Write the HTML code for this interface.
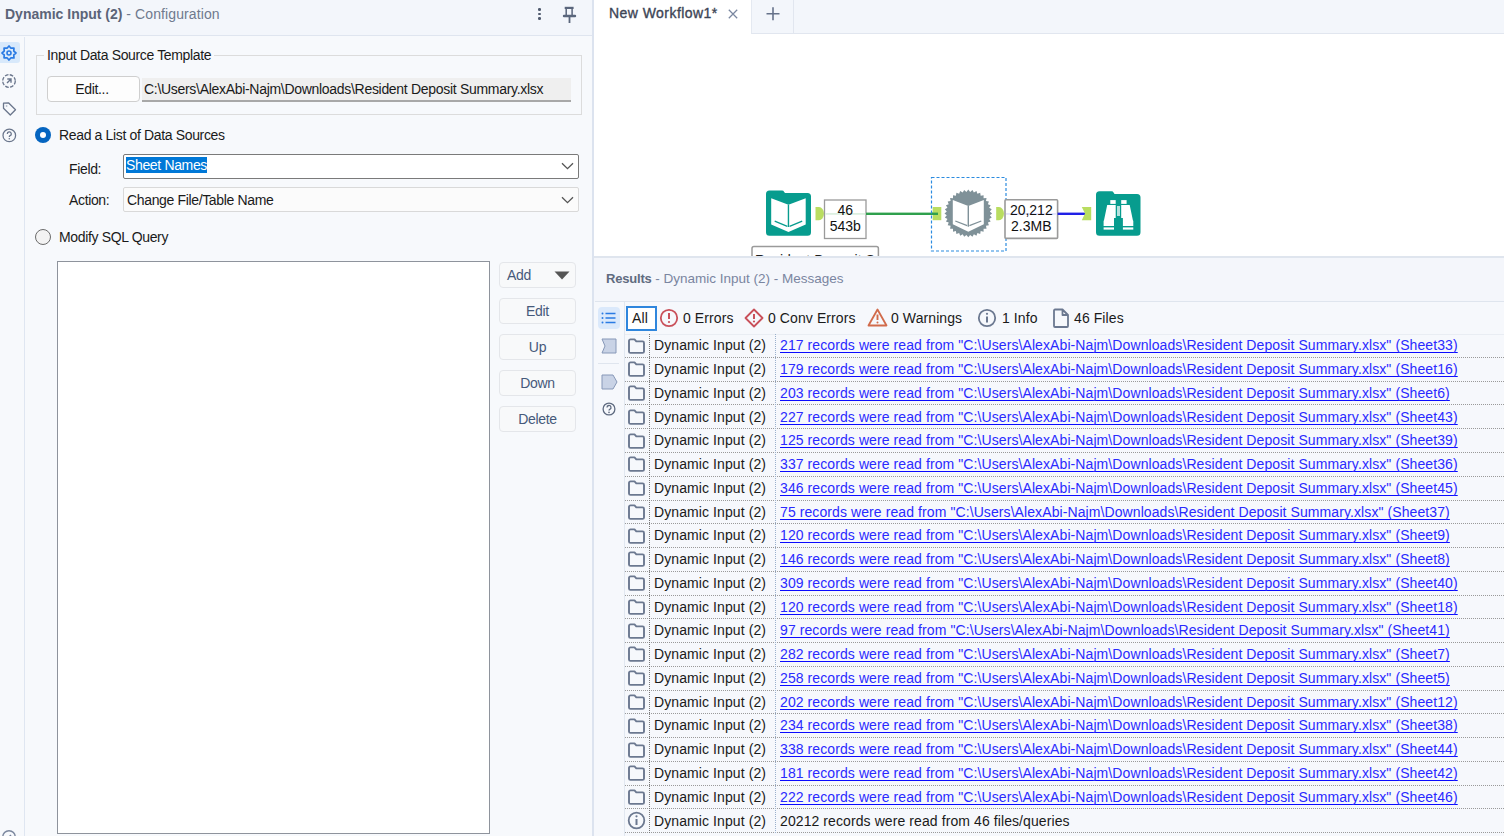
<!DOCTYPE html><html><head><meta charset="utf-8"><style>
*{margin:0;padding:0;box-sizing:border-box}
html,body{width:1504px;height:836px;overflow:hidden;background:#f7f9fc;font-family:"Liberation Sans",sans-serif;color:#1b1b1b}
.a{position:absolute}
.t{position:absolute;white-space:nowrap}
.lp{font-size:14px;letter-spacing:-0.35px;color:#1a1a1a}
.rt{font-size:14px;color:#1a1a1a;letter-spacing:0.09px}
.row{position:absolute;left:625px;width:879px;height:23.76px;border-bottom:1px dotted #9a9a9a}
.lnk{color:#2a2aff;text-decoration:underline;text-decoration-color:#0a0aff;text-decoration-skip-ink:none;text-underline-offset:1.8px}
.btn{position:absolute;left:499px;width:77px;height:25.5px;border:1px solid #e4e6ea;border-radius:4px;background:#f8f9fa;font-size:14px;color:#46597a;text-align:center;line-height:25px;letter-spacing:-0.3px}
</style></head><body>
<div class="a" style="left:0;top:0;width:592px;height:36px;background:#f3f6fb;border-bottom:1px solid #dfe5ef"></div>
<div class="t" style="left:5px;top:6px;font-size:14px;line-height:16px;color:#5b6478"><b>Dynamic Input (2)</b> <span style="color:#6f7a8e;letter-spacing:0.1px">- Configuration</span></div>
<div class="a" style="left:538px;top:8px;width:2.6px;height:2.6px;border-radius:50%;background:#4f5a6e"></div>
<div class="a" style="left:538px;top:12.5px;width:2.6px;height:2.6px;border-radius:50%;background:#4f5a6e"></div>
<div class="a" style="left:538px;top:17px;width:2.6px;height:2.6px;border-radius:50%;background:#4f5a6e"></div>
<svg class="a" style="left:562px;top:5px" width="16" height="20" viewBox="0 0 16 20"><path d="M2.7 2.9h8.9" stroke="#5a667c" stroke-width="2.2"/><path d="M4.2 3.5v7.5M10.1 3.5v7.5" stroke="#5a667c" stroke-width="1.5"/><path d="M2 11h11" stroke="#5a667c" stroke-width="2.4" stroke-linecap="round"/><path d="M7.5 12v6" stroke="#5a667c" stroke-width="1.8"/></svg>
<div class="a" style="left:24px;top:37px;width:1px;height:799px;background:#dfe6f1"></div>
<div class="a" style="left:0;top:42px;width:20px;height:21px;background:#d8e9fb;border-radius:0 3px 3px 0"></div>
<svg class="a" style="left:0px;top:44px" width="18" height="18" viewBox="0 0 18 18"><polygon points="9.00,2.00 10.99,4.20 13.95,4.05 13.80,7.01 16.00,9.00 13.80,10.99 13.95,13.95 10.99,13.80 9.00,16.00 7.01,13.80 4.05,13.95 4.20,10.99 2.00,9.00 4.20,7.01 4.05,4.05 7.01,4.20" fill="none" stroke="#2a7be4" stroke-width="1.7" stroke-linejoin="round"/><circle cx="9" cy="9" r="2" fill="none" stroke="#2a7be4" stroke-width="1.6"/></svg>
<svg class="a" style="left:1px;top:72.5px" width="16" height="16" viewBox="0 0 16 16"><circle cx="8" cy="8" r="6.3" fill="none" stroke="#6a768c" stroke-width="1.3" stroke-dasharray="3.6 1.35"/><path d="M6 10l4-4M6.3 6H10v3.7" stroke="#6a768c" stroke-width="1.4" fill="none"/></svg>
<svg class="a" style="left:2px;top:100.5px" width="16" height="16" viewBox="0 0 16 16"><path d="M1.5 2.2v5l6.8 6.8 5.2-5.2L6.7 2z" fill="none" stroke="#6a768c" stroke-width="1.3" stroke-linejoin="round"/><circle cx="4.6" cy="5" r=".9" fill="#b8c0cc"/></svg>
<svg class="a" style="left:1.5px;top:127.5px" width="15" height="15" viewBox="0 0 15 15"><circle cx="7.3" cy="7.4" r="6.3" fill="none" stroke="#6a768c" stroke-width="1.25"/><path d="M5.3 5.9a2 2 0 1 1 2.8 1.8c-.6.3-.8.6-.8 1.3" stroke="#6a768c" stroke-width="1.3" fill="none"/><circle cx="7.3" cy="10.8" r=".8" fill="#6a768c"/></svg>
<svg class="a" style="left:0.85px;top:828.8px" width="16" height="16" viewBox="0 0 16 16"><circle cx="8" cy="8" r="6.3" fill="none" stroke="#7b879e" stroke-width="1.5"/><path d="M5.5 10.5l4.5-4.5" stroke="#7b879e" stroke-width="1.5"/></svg>
<div class="a" style="left:36px;top:55px;width:546px;height:60px;border:1px solid #dcdcdc"></div>
<div class="t lp" style="left:44px;top:46px;line-height:18px;padding:0 3px;background:#f7f9fc">Input Data Source Template</div>
<div class="a" style="left:47px;top:76px;width:93px;height:26px;border:1px solid #cfcfcf;border-radius:4px;background:#fdfdfd"></div>
<div class="t lp" style="left:45.5px;top:80px;width:93px;text-align:center;line-height:18px">Edit...</div>
<div class="a" style="left:142px;top:78px;width:429px;height:24px;background:#efefef;border-bottom:2px solid #a8a8a8"></div>
<div class="t lp" style="left:144px;top:80px;line-height:18px;letter-spacing:-0.3px">C:\Users\AlexAbi-Najm\Downloads\Resident Deposit Summary.xlsx</div>
<div class="a" style="left:35px;top:127px;width:16px;height:16px;border-radius:50%;background:#0565c0"></div>
<div class="a" style="left:40px;top:132px;width:6px;height:6px;border-radius:50%;background:#fff"></div>
<div class="t lp" style="left:59px;top:126px;line-height:18px">Read a List of Data Sources</div>
<div class="t lp" style="left:69px;top:160px;line-height:18px">Field:</div>
<div class="t lp" style="left:69px;top:191px;line-height:18px">Action:</div>
<div class="a" style="left:123px;top:154px;width:456px;height:25px;border:1px solid #7a7a7a;border-radius:2px;background:#fff"></div>
<div class="a" style="left:126px;top:157px;width:81px;height:16px;background:#0078d7"></div>
<div class="t lp" style="left:126px;top:156px;line-height:18px;color:#fff">Sheet Names</div>
<div class="a" style="left:123px;top:187px;width:456px;height:25px;border:1px solid #d9d9d9;border-radius:2px;background:#fbfbfb"></div>
<div class="t lp" style="left:127px;top:191px;line-height:18px">Change File/Table Name</div>
<svg class="a" style="left:561px;top:162px" width="13" height="8" viewBox="0 0 13 8"><path d="M1 1.2l5.5 5.5L12 1.2" stroke="#555" stroke-width="1.3" fill="none"/></svg>
<svg class="a" style="left:561px;top:196px" width="13" height="8" viewBox="0 0 13 8"><path d="M1 1.2l5.5 5.5L12 1.2" stroke="#555" stroke-width="1.3" fill="none"/></svg>
<div class="a" style="left:35px;top:229px;width:16px;height:16px;border-radius:50%;border:1.3px solid #6b6b6b;background:#f3f3f3"></div>
<div class="t lp" style="left:59px;top:228px;line-height:18px">Modify SQL Query</div>
<div class="a" style="left:57px;top:261px;width:433px;height:573px;border:1px solid #8e939c;background:#fff"></div>
<div class="btn" style="top:262px;text-align:left;padding-left:7px">Add</div>
<svg class="a" style="left:554px;top:271px" width="16" height="9" viewBox="0 0 16 9"><path d="M0.5 0.5h15L8 8.5z" fill="#555"/></svg>
<div class="btn" style="top:298px">Edit</div>
<div class="btn" style="top:334px">Up</div>
<div class="btn" style="top:370px">Down</div>
<div class="btn" style="top:406px">Delete</div>
<div class="a" style="left:592px;top:0;width:2px;height:836px;background:#dce3ef"></div>
<div class="a" style="left:594px;top:0;width:910px;height:256px;background:#fff"></div>
<div class="a" style="left:751px;top:0;width:753px;height:34px;background:#f3f6fb;border-bottom:1px solid #e1e6ef;border-left:1px solid #e4e9f1"></div>
<div class="a" style="left:793px;top:0;width:1px;height:33px;background:#e1e6ef"></div>
<div class="t" style="left:609px;top:5px;font-size:14px;line-height:16px;color:#3d4556;letter-spacing:0.45px;-webkit-text-stroke:0.35px #3d4556">New Workflow1*</div>
<svg class="a" style="left:728px;top:8.5px" width="10" height="10" viewBox="0 0 10 10"><path d="M0.8 0.8l8.4 8.4M9.2 0.8l-8.4 8.4" stroke="#7a87a0" stroke-width="1.25"/></svg>
<svg class="a" style="left:765.5px;top:6.5px" width="15" height="15" viewBox="0 0 15 15"><path d="M7 0.3v13M0.5 6.8h13" stroke="#66728a" stroke-width="1.6"/></svg>
<svg class="a" style="left:0;top:0" width="1504" height="256" viewBox="0 0 1504 256"><path d="M766,194.0 a3.5,3.5 0 0 1 3.5,-3.5 H782 a2.5,2.5 0 0 1 2.2,1.4 L785,193.1 H807.5 a3.5,3.5 0 0 1 3.5,3.5 V232.2 a3.5,3.5 0 0 1 -3.5,3.5 H769.5 a3.5,3.5 0 0 1 -3.5,-3.5Z" fill="#079c8e"/><path d="M771.2,198.2 L788.45,204.7 L805.7,198.2 L805.7,224.5 L788.45,232 L771.2,224.5Z" fill="#fff"/><path d="M788.45,204.7 V227" stroke="#079c8e" stroke-width="1.4"/><path d="M774.7,221.2 L787.35,226.4 M789.5500000000001,226.4 L802.2,221.2" stroke="#079c8e" stroke-width="1.3"/><path d="M815.5,207 H819 a5,6.6 0 0 1 0,13.2 H815.5Z" fill="#b9dd60"/><rect x="824.5" y="200" width="41.5" height="38.5" fill="#fff" stroke="#9a9a9a" stroke-width="1.3"/><rect x="825.2" y="213" width="40" height="1.8" fill="#dcefe0"/><rect x="866" y="212.6" width="67" height="2.4" fill="#2fa04d"/><rect x="931.5" y="177.5" width="74.5" height="73.5" fill="none" stroke="#2b8be0" stroke-width="1.2" stroke-dasharray="3 2"/><rect x="932.7" y="207" width="8.6" height="13.2" fill="#b9dd60"/><rect x="932" y="212.6" width="6" height="2.4" fill="#2fa04d"/><polygon points="992.10,213.40 989.82,215.28 991.74,217.53 989.16,218.99 990.66,221.54 987.88,222.53 988.91,225.30 985.99,225.79 986.53,228.70 983.57,228.67 983.60,231.63 980.69,231.09 980.20,234.01 977.43,232.98 976.44,235.76 973.89,234.26 972.43,236.84 970.18,234.92 968.30,237.20 966.42,234.92 964.17,236.84 962.71,234.26 960.16,235.76 959.17,232.98 956.40,234.01 955.91,231.09 953.00,231.63 953.03,228.67 950.07,228.70 950.61,225.79 947.69,225.30 948.72,222.53 945.94,221.54 947.44,218.99 944.86,217.53 946.78,215.28 944.50,213.40 946.78,211.52 944.86,209.27 947.44,207.81 945.94,205.26 948.72,204.27 947.69,201.50 950.61,201.01 950.07,198.10 953.03,198.13 953.00,195.17 955.91,195.71 956.40,192.79 959.17,193.82 960.16,191.04 962.71,192.54 964.17,189.96 966.42,191.88 968.30,189.60 970.18,191.88 972.43,189.96 973.89,192.54 976.44,191.04 977.43,193.82 980.20,192.79 980.69,195.71 983.60,195.17 983.57,198.13 986.53,198.10 985.99,201.01 988.91,201.50 987.88,204.27 990.66,205.26 989.16,207.81 991.74,209.27 989.82,211.52" fill="#7f9198"/><path d="M952.8,200.1 L968.3,206 L983.8,200.1 L983.8,224.3 L968.3,231.8 L952.8,224.3Z" fill="#fff"/><path d="M968.3,206 V226.8" stroke="#7f9198" stroke-width="1.4"/><path d="M955.3,221.0 L967.1999999999999,225.60000000000002 M969.4,225.60000000000002 L981.3,221.0" stroke="#7f9198" stroke-width="1.3"/><path d="M996.2,207 H999 a5,6.6 0 0 1 0,13.2 H996.2Z" fill="#b9dd60"/><rect x="1005" y="199.8" width="52.6" height="38.6" rx="1" fill="#fff" stroke="#9a9a9a" stroke-width="1.6"/><rect x="1006" y="213" width="50.5" height="1.8" fill="#e3e3fb"/><rect x="1057.6" y="212.6" width="28" height="2.4" fill="#2020e6"/><path d="M1081.8,207 H1091.2 V220.2 H1081.8 L1085,213.6Z" fill="#b9dd60"/><path d="M1096,194.8 a3.5,3.5 0 0 1 3.5,-3.5 H1111.5 a2.5,2.5 0 0 1 2.2,1.4 L1114.5,193.9 H1137.0 a3.5,3.5 0 0 1 3.5,3.5 V232.2 a3.5,3.5 0 0 1 -3.5,3.5 H1099.5 a3.5,3.5 0 0 1 -3.5,-3.5Z" fill="#079c8e"/><polygon points="1107.20,205.10 1115.70,205.10 1115.70,218.10 1114.00,218.10 1114.00,226.00 1103.60,226.00 1103.60,221.00 1104.00,220.20" fill="#fff"/><polygon points="1129.70,205.10 1121.20,205.10 1121.20,218.10 1122.90,218.10 1122.90,226.00 1133.30,226.00 1133.30,221.00 1132.90,220.20" fill="#fff"/><rect x="1103.6" y="227.4" width="10.4" height="2.2" fill="#fff"/><rect x="1122.9" y="227.4" width="10.4" height="2.2" fill="#fff"/><rect x="1110.3" y="200.1" width="5.4" height="3.8" fill="#fff"/><rect x="1121.2" y="200.1" width="5.4" height="3.8" fill="#fff"/><rect x="1117" y="206" width="3" height="10" fill="#fff" opacity=".7"/><rect x="752" y="246.4" width="126.4" height="20" rx="2" fill="#fff" stroke="#9a9a9a" stroke-width="1.5"/></svg>
<div class="t" style="left:824.5px;top:202px;width:41.5px;text-align:center;font-size:14px;line-height:16px;color:#111">46<br>543b</div>
<div class="t" style="left:1005px;top:202px;width:52.6px;text-align:center;font-size:14px;line-height:16px;color:#111">20,212<br>2.3MB</div>
<div class="a" style="left:752px;top:246px;width:126px;height:10px;overflow:hidden"><div class="t" style="left:3px;top:5.5px;font-size:14px;line-height:16px;color:#222">Resident Deposit Su</div></div>
<div class="a" style="left:594px;top:256px;width:910px;height:2px;background:#dfe5ee"></div>
<div class="a" style="left:594px;top:258px;width:910px;height:578px;background:#f4f6fb"></div>
<div class="t" style="left:606px;top:271px;font-size:13px;line-height:16px;color:#5f6b80"><b style="letter-spacing:-0.2px">Results</b> <span style="color:#7a85a0;font-size:13.5px">- Dynamic Input (2) - Messages</span></div>
<div class="a" style="left:595px;top:301px;width:909px;height:1px;background:#dfe5ee"></div>
<div class="a" style="left:594px;top:302px;width:910px;height:534px;background:#f6f8fc"></div>
<div class="a" style="left:624px;top:302px;width:1px;height:534px;background:#e1e7f0"></div>
<div class="a" style="left:598px;top:307px;width:22px;height:22px;border-radius:4px;background:#dbe9fb"></div>
<svg class="a" style="left:601px;top:311px" width="16" height="14" viewBox="0 0 16 14"><path d="M4.5 2.5h10M4.5 7h10M4.5 11.5h10" stroke="#2a7be4" stroke-width="1.5"/><circle cx="1.5" cy="2.5" r="1" fill="#2a7be4"/><circle cx="1.5" cy="7" r="1" fill="#2a7be4"/><circle cx="1.5" cy="11.5" r="1" fill="#2a7be4"/></svg>
<svg class="a" style="left:601px;top:337.5px" width="16" height="16" viewBox="0 0 16 16"><path d="M1 1h14v14H1l3-7z" fill="#c9d3e6" stroke="#8798b8" stroke-width="1"/></svg>
<div class="a" style="left:598px;top:363px;width:21px;height:1px;background:#dfe5ee"></div>
<svg class="a" style="left:601px;top:373.5px" width="17" height="16" viewBox="0 0 17 16"><path d="M1 1h11l4 7-4 7H1z" fill="#c9d3e6" stroke="#8798b8" stroke-width="1"/></svg>
<svg class="a" style="left:602px;top:402px" width="14" height="14" viewBox="0 0 14 14"><circle cx="7" cy="7" r="5.9" fill="none" stroke="#5f6b80" stroke-width="1.3"/><path d="M5 5.5a2 2 0 1 1 2.8 1.8c-.6.3-.8.6-.8 1.3" stroke="#5f6b80" stroke-width="1.3" fill="none"/><circle cx="7" cy="10.4" r=".8" fill="#5f6b80"/></svg>
<div class="a" style="left:625.5px;top:305.5px;width:31px;height:25px;border:2px solid #2f86dd;background:#fff"></div>
<div class="t rt" style="left:632px;top:310px;line-height:16px">All</div>
<svg class="a" style="left:659px;top:308px" width="20" height="20" viewBox="0 0 20 20"><circle cx="10" cy="10" r="8.2" fill="none" stroke="#c9505a" stroke-width="1.8"/><path d="M10 5v6" stroke="#c9505a" stroke-width="2"/><circle cx="10" cy="14" r="1.1" fill="#c9505a"/></svg>
<div class="t rt" style="left:683px;top:310px;line-height:16px">0 Errors</div>
<svg class="a" style="left:744px;top:308px" width="20" height="20" viewBox="0 0 20 20"><path d="M10 1.5L18.5 10 10 18.5 1.5 10z" fill="none" stroke="#c9505a" stroke-width="1.8" stroke-linejoin="round"/><path d="M10 6v5" stroke="#c9505a" stroke-width="2"/><circle cx="10" cy="13.5" r="1.1" fill="#c9505a"/></svg>
<div class="t rt" style="left:768px;top:310px;line-height:16px">0 Conv Errors</div>
<svg class="a" style="left:867px;top:308px" width="21" height="19" viewBox="0 0 21 19"><path d="M10.5 1.5L19.5 17.5H1.5z" fill="none" stroke="#d16b4b" stroke-width="1.8" stroke-linejoin="round"/><path d="M10.5 6.5v5.5" stroke="#d16b4b" stroke-width="1.9"/><circle cx="10.5" cy="14.5" r="1" fill="#d16b4b"/></svg>
<div class="t rt" style="left:891px;top:310px;line-height:16px">0 Warnings</div>
<svg class="a" style="left:977px;top:308px" width="20" height="20" viewBox="0 0 20 20"><circle cx="10" cy="10" r="8.2" fill="none" stroke="#6b7890" stroke-width="1.8"/><path d="M10 8.5v6" stroke="#6b7890" stroke-width="2"/><circle cx="10" cy="5.8" r="1.1" fill="#6b7890"/></svg>
<div class="t rt" style="left:1002px;top:310px;line-height:16px">1 Info</div>
<svg class="a" style="left:1052px;top:308px" width="18" height="20" viewBox="0 0 18 20"><path d="M2 2.5a1 1 0 0 1 1-1h7.5L16 7v11a1 1 0 0 1-1 1H3a1 1 0 0 1-1-1zM10.5 1.5V7H16" fill="none" stroke="#6b7890" stroke-width="1.8" stroke-linejoin="round"/></svg>
<div class="t rt" style="left:1074px;top:310px;line-height:16px">46 Files</div>
<div class="a" style="left:625px;top:333.6px;width:879px;height:1px;background:#e9edf3"></div>
<div class="row" style="top:334.20px"></div>
<svg class="a" style="left:627px;top:337.60px" width="19" height="17" viewBox="0 0 19 17"><path d="M2 2.9a1.5 1.5 0 0 1 1.5-1.5h4l1.8 2h6.2A1.5 1.5 0 0 1 17 4.9v8.5a1.5 1.5 0 0 1-1.5 1.5h-12A1.5 1.5 0 0 1 2 13.4z" fill="none" stroke="#6b7890" stroke-width="1.9" stroke-linejoin="round"/></svg>
<div class="t rt" style="left:654px;top:334.30px;line-height:23.76px">Dynamic Input (2)</div>
<div class="t rt lnk" style="left:780px;top:334.30px;line-height:23.76px">217 records were read from "C:\Users\AlexAbi-Najm\Downloads\Resident Deposit Summary.xlsx" (Sheet33)</div>
<div class="row" style="top:357.96px"></div>
<svg class="a" style="left:627px;top:361.36px" width="19" height="17" viewBox="0 0 19 17"><path d="M2 2.9a1.5 1.5 0 0 1 1.5-1.5h4l1.8 2h6.2A1.5 1.5 0 0 1 17 4.9v8.5a1.5 1.5 0 0 1-1.5 1.5h-12A1.5 1.5 0 0 1 2 13.4z" fill="none" stroke="#6b7890" stroke-width="1.9" stroke-linejoin="round"/></svg>
<div class="t rt" style="left:654px;top:358.06px;line-height:23.76px">Dynamic Input (2)</div>
<div class="t rt lnk" style="left:780px;top:358.06px;line-height:23.76px">179 records were read from "C:\Users\AlexAbi-Najm\Downloads\Resident Deposit Summary.xlsx" (Sheet16)</div>
<div class="row" style="top:381.72px"></div>
<svg class="a" style="left:627px;top:385.12px" width="19" height="17" viewBox="0 0 19 17"><path d="M2 2.9a1.5 1.5 0 0 1 1.5-1.5h4l1.8 2h6.2A1.5 1.5 0 0 1 17 4.9v8.5a1.5 1.5 0 0 1-1.5 1.5h-12A1.5 1.5 0 0 1 2 13.4z" fill="none" stroke="#6b7890" stroke-width="1.9" stroke-linejoin="round"/></svg>
<div class="t rt" style="left:654px;top:381.82px;line-height:23.76px">Dynamic Input (2)</div>
<div class="t rt lnk" style="left:780px;top:381.82px;line-height:23.76px">203 records were read from "C:\Users\AlexAbi-Najm\Downloads\Resident Deposit Summary.xlsx" (Sheet6)</div>
<div class="row" style="top:405.48px"></div>
<svg class="a" style="left:627px;top:408.88px" width="19" height="17" viewBox="0 0 19 17"><path d="M2 2.9a1.5 1.5 0 0 1 1.5-1.5h4l1.8 2h6.2A1.5 1.5 0 0 1 17 4.9v8.5a1.5 1.5 0 0 1-1.5 1.5h-12A1.5 1.5 0 0 1 2 13.4z" fill="none" stroke="#6b7890" stroke-width="1.9" stroke-linejoin="round"/></svg>
<div class="t rt" style="left:654px;top:405.58px;line-height:23.76px">Dynamic Input (2)</div>
<div class="t rt lnk" style="left:780px;top:405.58px;line-height:23.76px">227 records were read from "C:\Users\AlexAbi-Najm\Downloads\Resident Deposit Summary.xlsx" (Sheet43)</div>
<div class="row" style="top:429.24px"></div>
<svg class="a" style="left:627px;top:432.64px" width="19" height="17" viewBox="0 0 19 17"><path d="M2 2.9a1.5 1.5 0 0 1 1.5-1.5h4l1.8 2h6.2A1.5 1.5 0 0 1 17 4.9v8.5a1.5 1.5 0 0 1-1.5 1.5h-12A1.5 1.5 0 0 1 2 13.4z" fill="none" stroke="#6b7890" stroke-width="1.9" stroke-linejoin="round"/></svg>
<div class="t rt" style="left:654px;top:429.34px;line-height:23.76px">Dynamic Input (2)</div>
<div class="t rt lnk" style="left:780px;top:429.34px;line-height:23.76px">125 records were read from "C:\Users\AlexAbi-Najm\Downloads\Resident Deposit Summary.xlsx" (Sheet39)</div>
<div class="row" style="top:453.00px"></div>
<svg class="a" style="left:627px;top:456.40px" width="19" height="17" viewBox="0 0 19 17"><path d="M2 2.9a1.5 1.5 0 0 1 1.5-1.5h4l1.8 2h6.2A1.5 1.5 0 0 1 17 4.9v8.5a1.5 1.5 0 0 1-1.5 1.5h-12A1.5 1.5 0 0 1 2 13.4z" fill="none" stroke="#6b7890" stroke-width="1.9" stroke-linejoin="round"/></svg>
<div class="t rt" style="left:654px;top:453.10px;line-height:23.76px">Dynamic Input (2)</div>
<div class="t rt lnk" style="left:780px;top:453.10px;line-height:23.76px">337 records were read from "C:\Users\AlexAbi-Najm\Downloads\Resident Deposit Summary.xlsx" (Sheet36)</div>
<div class="row" style="top:476.76px"></div>
<svg class="a" style="left:627px;top:480.16px" width="19" height="17" viewBox="0 0 19 17"><path d="M2 2.9a1.5 1.5 0 0 1 1.5-1.5h4l1.8 2h6.2A1.5 1.5 0 0 1 17 4.9v8.5a1.5 1.5 0 0 1-1.5 1.5h-12A1.5 1.5 0 0 1 2 13.4z" fill="none" stroke="#6b7890" stroke-width="1.9" stroke-linejoin="round"/></svg>
<div class="t rt" style="left:654px;top:476.86px;line-height:23.76px">Dynamic Input (2)</div>
<div class="t rt lnk" style="left:780px;top:476.86px;line-height:23.76px">346 records were read from "C:\Users\AlexAbi-Najm\Downloads\Resident Deposit Summary.xlsx" (Sheet45)</div>
<div class="row" style="top:500.52px"></div>
<svg class="a" style="left:627px;top:503.92px" width="19" height="17" viewBox="0 0 19 17"><path d="M2 2.9a1.5 1.5 0 0 1 1.5-1.5h4l1.8 2h6.2A1.5 1.5 0 0 1 17 4.9v8.5a1.5 1.5 0 0 1-1.5 1.5h-12A1.5 1.5 0 0 1 2 13.4z" fill="none" stroke="#6b7890" stroke-width="1.9" stroke-linejoin="round"/></svg>
<div class="t rt" style="left:654px;top:500.62px;line-height:23.76px">Dynamic Input (2)</div>
<div class="t rt lnk" style="left:780px;top:500.62px;line-height:23.76px">75 records were read from "C:\Users\AlexAbi-Najm\Downloads\Resident Deposit Summary.xlsx" (Sheet37)</div>
<div class="row" style="top:524.28px"></div>
<svg class="a" style="left:627px;top:527.68px" width="19" height="17" viewBox="0 0 19 17"><path d="M2 2.9a1.5 1.5 0 0 1 1.5-1.5h4l1.8 2h6.2A1.5 1.5 0 0 1 17 4.9v8.5a1.5 1.5 0 0 1-1.5 1.5h-12A1.5 1.5 0 0 1 2 13.4z" fill="none" stroke="#6b7890" stroke-width="1.9" stroke-linejoin="round"/></svg>
<div class="t rt" style="left:654px;top:524.38px;line-height:23.76px">Dynamic Input (2)</div>
<div class="t rt lnk" style="left:780px;top:524.38px;line-height:23.76px">120 records were read from "C:\Users\AlexAbi-Najm\Downloads\Resident Deposit Summary.xlsx" (Sheet9)</div>
<div class="row" style="top:548.04px"></div>
<svg class="a" style="left:627px;top:551.44px" width="19" height="17" viewBox="0 0 19 17"><path d="M2 2.9a1.5 1.5 0 0 1 1.5-1.5h4l1.8 2h6.2A1.5 1.5 0 0 1 17 4.9v8.5a1.5 1.5 0 0 1-1.5 1.5h-12A1.5 1.5 0 0 1 2 13.4z" fill="none" stroke="#6b7890" stroke-width="1.9" stroke-linejoin="round"/></svg>
<div class="t rt" style="left:654px;top:548.14px;line-height:23.76px">Dynamic Input (2)</div>
<div class="t rt lnk" style="left:780px;top:548.14px;line-height:23.76px">146 records were read from "C:\Users\AlexAbi-Najm\Downloads\Resident Deposit Summary.xlsx" (Sheet8)</div>
<div class="row" style="top:571.80px"></div>
<svg class="a" style="left:627px;top:575.20px" width="19" height="17" viewBox="0 0 19 17"><path d="M2 2.9a1.5 1.5 0 0 1 1.5-1.5h4l1.8 2h6.2A1.5 1.5 0 0 1 17 4.9v8.5a1.5 1.5 0 0 1-1.5 1.5h-12A1.5 1.5 0 0 1 2 13.4z" fill="none" stroke="#6b7890" stroke-width="1.9" stroke-linejoin="round"/></svg>
<div class="t rt" style="left:654px;top:571.90px;line-height:23.76px">Dynamic Input (2)</div>
<div class="t rt lnk" style="left:780px;top:571.90px;line-height:23.76px">309 records were read from "C:\Users\AlexAbi-Najm\Downloads\Resident Deposit Summary.xlsx" (Sheet40)</div>
<div class="row" style="top:595.56px"></div>
<svg class="a" style="left:627px;top:598.96px" width="19" height="17" viewBox="0 0 19 17"><path d="M2 2.9a1.5 1.5 0 0 1 1.5-1.5h4l1.8 2h6.2A1.5 1.5 0 0 1 17 4.9v8.5a1.5 1.5 0 0 1-1.5 1.5h-12A1.5 1.5 0 0 1 2 13.4z" fill="none" stroke="#6b7890" stroke-width="1.9" stroke-linejoin="round"/></svg>
<div class="t rt" style="left:654px;top:595.66px;line-height:23.76px">Dynamic Input (2)</div>
<div class="t rt lnk" style="left:780px;top:595.66px;line-height:23.76px">120 records were read from "C:\Users\AlexAbi-Najm\Downloads\Resident Deposit Summary.xlsx" (Sheet18)</div>
<div class="row" style="top:619.32px"></div>
<svg class="a" style="left:627px;top:622.72px" width="19" height="17" viewBox="0 0 19 17"><path d="M2 2.9a1.5 1.5 0 0 1 1.5-1.5h4l1.8 2h6.2A1.5 1.5 0 0 1 17 4.9v8.5a1.5 1.5 0 0 1-1.5 1.5h-12A1.5 1.5 0 0 1 2 13.4z" fill="none" stroke="#6b7890" stroke-width="1.9" stroke-linejoin="round"/></svg>
<div class="t rt" style="left:654px;top:619.42px;line-height:23.76px">Dynamic Input (2)</div>
<div class="t rt lnk" style="left:780px;top:619.42px;line-height:23.76px">97 records were read from "C:\Users\AlexAbi-Najm\Downloads\Resident Deposit Summary.xlsx" (Sheet41)</div>
<div class="row" style="top:643.08px"></div>
<svg class="a" style="left:627px;top:646.48px" width="19" height="17" viewBox="0 0 19 17"><path d="M2 2.9a1.5 1.5 0 0 1 1.5-1.5h4l1.8 2h6.2A1.5 1.5 0 0 1 17 4.9v8.5a1.5 1.5 0 0 1-1.5 1.5h-12A1.5 1.5 0 0 1 2 13.4z" fill="none" stroke="#6b7890" stroke-width="1.9" stroke-linejoin="round"/></svg>
<div class="t rt" style="left:654px;top:643.18px;line-height:23.76px">Dynamic Input (2)</div>
<div class="t rt lnk" style="left:780px;top:643.18px;line-height:23.76px">282 records were read from "C:\Users\AlexAbi-Najm\Downloads\Resident Deposit Summary.xlsx" (Sheet7)</div>
<div class="row" style="top:666.84px"></div>
<svg class="a" style="left:627px;top:670.24px" width="19" height="17" viewBox="0 0 19 17"><path d="M2 2.9a1.5 1.5 0 0 1 1.5-1.5h4l1.8 2h6.2A1.5 1.5 0 0 1 17 4.9v8.5a1.5 1.5 0 0 1-1.5 1.5h-12A1.5 1.5 0 0 1 2 13.4z" fill="none" stroke="#6b7890" stroke-width="1.9" stroke-linejoin="round"/></svg>
<div class="t rt" style="left:654px;top:666.94px;line-height:23.76px">Dynamic Input (2)</div>
<div class="t rt lnk" style="left:780px;top:666.94px;line-height:23.76px">258 records were read from "C:\Users\AlexAbi-Najm\Downloads\Resident Deposit Summary.xlsx" (Sheet5)</div>
<div class="row" style="top:690.60px"></div>
<svg class="a" style="left:627px;top:694.00px" width="19" height="17" viewBox="0 0 19 17"><path d="M2 2.9a1.5 1.5 0 0 1 1.5-1.5h4l1.8 2h6.2A1.5 1.5 0 0 1 17 4.9v8.5a1.5 1.5 0 0 1-1.5 1.5h-12A1.5 1.5 0 0 1 2 13.4z" fill="none" stroke="#6b7890" stroke-width="1.9" stroke-linejoin="round"/></svg>
<div class="t rt" style="left:654px;top:690.70px;line-height:23.76px">Dynamic Input (2)</div>
<div class="t rt lnk" style="left:780px;top:690.70px;line-height:23.76px">202 records were read from "C:\Users\AlexAbi-Najm\Downloads\Resident Deposit Summary.xlsx" (Sheet12)</div>
<div class="row" style="top:714.36px"></div>
<svg class="a" style="left:627px;top:717.76px" width="19" height="17" viewBox="0 0 19 17"><path d="M2 2.9a1.5 1.5 0 0 1 1.5-1.5h4l1.8 2h6.2A1.5 1.5 0 0 1 17 4.9v8.5a1.5 1.5 0 0 1-1.5 1.5h-12A1.5 1.5 0 0 1 2 13.4z" fill="none" stroke="#6b7890" stroke-width="1.9" stroke-linejoin="round"/></svg>
<div class="t rt" style="left:654px;top:714.46px;line-height:23.76px">Dynamic Input (2)</div>
<div class="t rt lnk" style="left:780px;top:714.46px;line-height:23.76px">234 records were read from "C:\Users\AlexAbi-Najm\Downloads\Resident Deposit Summary.xlsx" (Sheet38)</div>
<div class="row" style="top:738.12px"></div>
<svg class="a" style="left:627px;top:741.52px" width="19" height="17" viewBox="0 0 19 17"><path d="M2 2.9a1.5 1.5 0 0 1 1.5-1.5h4l1.8 2h6.2A1.5 1.5 0 0 1 17 4.9v8.5a1.5 1.5 0 0 1-1.5 1.5h-12A1.5 1.5 0 0 1 2 13.4z" fill="none" stroke="#6b7890" stroke-width="1.9" stroke-linejoin="round"/></svg>
<div class="t rt" style="left:654px;top:738.22px;line-height:23.76px">Dynamic Input (2)</div>
<div class="t rt lnk" style="left:780px;top:738.22px;line-height:23.76px">338 records were read from "C:\Users\AlexAbi-Najm\Downloads\Resident Deposit Summary.xlsx" (Sheet44)</div>
<div class="row" style="top:761.88px"></div>
<svg class="a" style="left:627px;top:765.28px" width="19" height="17" viewBox="0 0 19 17"><path d="M2 2.9a1.5 1.5 0 0 1 1.5-1.5h4l1.8 2h6.2A1.5 1.5 0 0 1 17 4.9v8.5a1.5 1.5 0 0 1-1.5 1.5h-12A1.5 1.5 0 0 1 2 13.4z" fill="none" stroke="#6b7890" stroke-width="1.9" stroke-linejoin="round"/></svg>
<div class="t rt" style="left:654px;top:761.98px;line-height:23.76px">Dynamic Input (2)</div>
<div class="t rt lnk" style="left:780px;top:761.98px;line-height:23.76px">181 records were read from "C:\Users\AlexAbi-Najm\Downloads\Resident Deposit Summary.xlsx" (Sheet42)</div>
<div class="row" style="top:785.64px"></div>
<svg class="a" style="left:627px;top:789.04px" width="19" height="17" viewBox="0 0 19 17"><path d="M2 2.9a1.5 1.5 0 0 1 1.5-1.5h4l1.8 2h6.2A1.5 1.5 0 0 1 17 4.9v8.5a1.5 1.5 0 0 1-1.5 1.5h-12A1.5 1.5 0 0 1 2 13.4z" fill="none" stroke="#6b7890" stroke-width="1.9" stroke-linejoin="round"/></svg>
<div class="t rt" style="left:654px;top:785.74px;line-height:23.76px">Dynamic Input (2)</div>
<div class="t rt lnk" style="left:780px;top:785.74px;line-height:23.76px">222 records were read from "C:\Users\AlexAbi-Najm\Downloads\Resident Deposit Summary.xlsx" (Sheet46)</div>
<div class="row" style="top:809.40px"></div>
<svg class="a" style="left:627px;top:810.80px" width="19" height="19" viewBox="0 0 19 19"><circle cx="9.5" cy="9.5" r="7.8" fill="none" stroke="#6b7890" stroke-width="1.8"/><path d="M9.5 8v6" stroke="#6b7890" stroke-width="2"/><circle cx="9.5" cy="5.3" r="1.1" fill="#6b7890"/></svg>
<div class="t rt" style="left:654px;top:809.50px;line-height:23.76px">Dynamic Input (2)</div>
<div class="t rt" style="left:780px;top:809.50px;line-height:23.76px">20212 records were read from 46 files/queries</div>
<div class="a" style="left:649px;top:333.6px;width:0;height:498.96px;border-left:1px dotted #777"></div>
<div class="a" style="left:775px;top:333.6px;width:0;height:498.96px;border-left:1px dotted #9ab0cc"></div>
</body></html>
